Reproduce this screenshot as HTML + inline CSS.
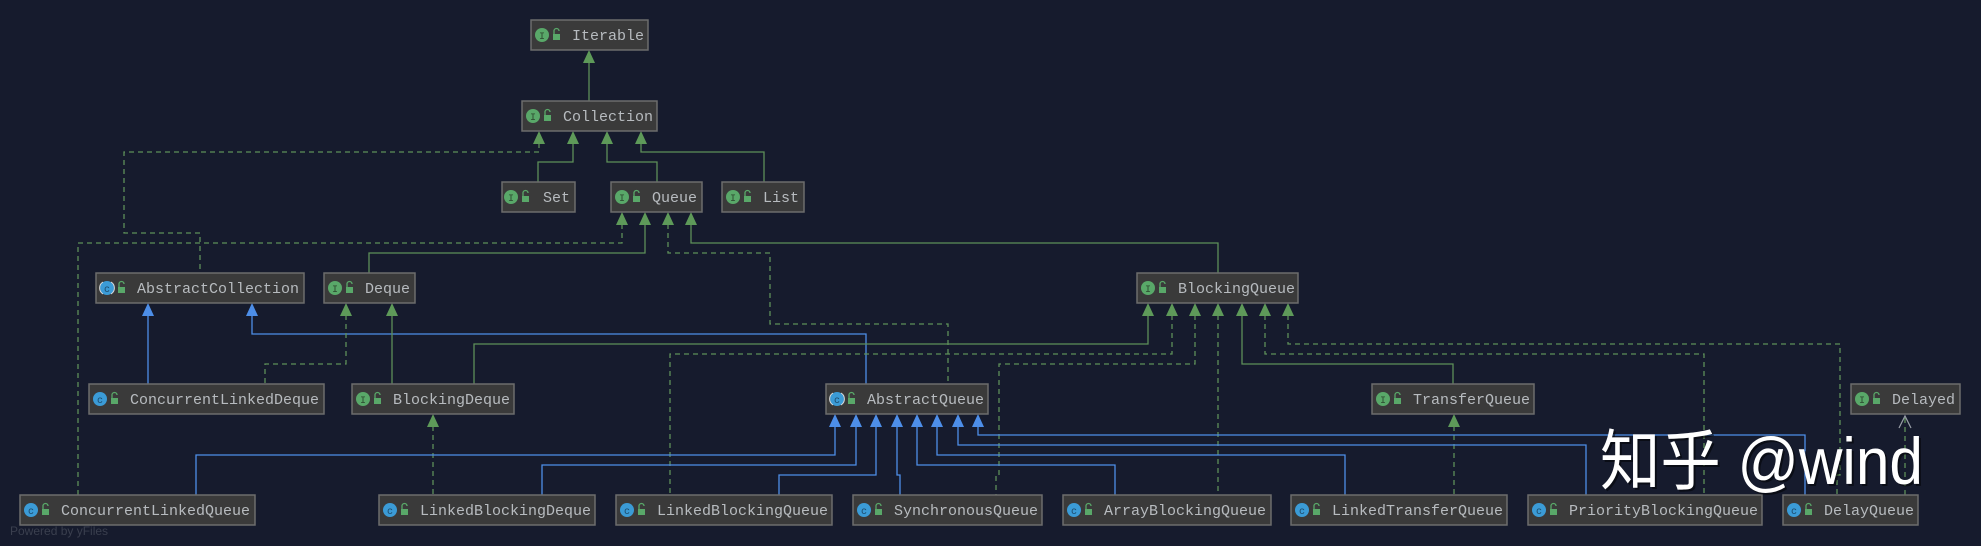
<!DOCTYPE html>
<html><head><meta charset="utf-8"><style>
html,body{margin:0;padding:0;background:#161b2d;}
svg{display:block}
.b{fill:#3a3a3a;stroke:#6c6c6c;stroke-width:1.5}
.t{font-family:"Liberation Mono",monospace;font-size:15px;fill:#b7bbbf}
.g{stroke:#5e8f59;stroke-width:1.3;fill:none}
.gd{stroke:#5e8f59;stroke-width:1.3;fill:none;stroke-dasharray:5,4}
.bl{stroke:#4d8ee8;stroke-width:1.3;fill:none}
.ga{fill:#5e9a59}
.ba{fill:#4d8ee8}
</style></head><body>
<svg width="1981" height="546" viewBox="0 0 1981 546" xmlns="http://www.w3.org/2000/svg">
<defs>
<g id="ai"><circle cx="0" cy="0" r="7" fill="#59a869"/><text x="0" y="4" font-family="Liberation Mono,monospace" font-size="10" fill="#2d4a30" text-anchor="middle">I</text><rect x="11" y="-1" width="7" height="6" fill="#59a869"/><path d="M12,-1 v-3 a2.5,2.5 0 0 1 5,0" stroke="#59a869" stroke-width="1.3" fill="none"/></g>
<g id="ac"><circle cx="0" cy="0" r="7" fill="#3b9bd6"/><text x="0" y="4" font-family="Liberation Mono,monospace" font-size="10" fill="#1d4a6a" text-anchor="middle">c</text><rect x="11" y="-1" width="7" height="6" fill="#59a869"/><path d="M12,-1 v-3 a2.5,2.5 0 0 1 5,0" stroke="#59a869" stroke-width="1.3" fill="none"/></g>
<g id="aa"><circle cx="0" cy="0" r="7" fill="#3b9bd6"/><path d="M-4,-6 a7,7 0 0 0 0,12 M4,-6 a7,7 0 0 1 0,12" stroke="#ddd" stroke-width="1" fill="none"/><text x="0" y="4" font-family="Liberation Mono,monospace" font-size="10" fill="#1d4a6a" text-anchor="middle">c</text><rect x="11" y="-1" width="7" height="6" fill="#59a869"/><path d="M12,-1 v-3 a2.5,2.5 0 0 1 5,0" stroke="#59a869" stroke-width="1.3" fill="none"/></g>
</defs>

<!-- edges -->
<path class="g" d="M589,62 V101"/>
<path class="gd" d="M539,143 V152 H124 V233 H200 V273"/>
<path class="g" d="M573,143 V162 H538 V182"/>
<path class="g" d="M607,143 V162 H657 V182"/>
<path class="g" d="M641,143 V152 H764 V182"/>
<path class="gd" d="M622,224 V243 H78 V495"/>
<path class="g" d="M645,224 V253 H369 V273"/>
<path class="gd" d="M668,224 V253 H770 V324 H948 V384"/>
<path class="g" d="M691,224 V243 H1218 V273"/>
<path class="bl" d="M148,315 V384"/>
<path class="bl" d="M252,315 V334 H866 V384"/>
<path class="gd" d="M346,315 V364 H265 V384"/>
<path class="g" d="M392,315 V384"/>
<path class="gd" d="M433,426 V495"/>
<path class="g" d="M1148,315 V344 H474 V384"/>
<path class="gd" d="M1172,315 V354 H670 V495"/>
<path class="gd" d="M1195,315 V364 H999 V476 H996 V495"/>
<path class="gd" d="M1218,315 V495"/>
<path class="g" d="M1242,315 V364 H1453 V384"/>
<path class="gd" d="M1265,315 V354 H1704 V495"/>
<path class="gd" d="M1288,315 V344 H1840 V475 H1837 V495"/>
<path class="gd" d="M1454,426 V495"/>
<path class="gd" d="M1905,418 V495"/>
<path d="M1899,428 L1905,416 L1911,428" stroke="#9aa0a8" stroke-width="1.2" fill="none"/>
<path class="bl" d="M835,426 V455 H196 V495"/>
<path class="bl" d="M856,426 V465 H542 V495"/>
<path class="bl" d="M876,426 V475 H779 V495"/>
<path class="bl" d="M897,426 V475 H900 V495"/>
<path class="bl" d="M917,426 V465 H1115 V495"/>
<path class="bl" d="M937,426 V455 H1345 V495"/>
<path class="bl" d="M958,426 V445 H1586 V495"/>
<path class="bl" d="M978,426 V435 H1805 V495"/>

<!-- arrowheads -->
<g class="ga">
<polygon points="589,50 583,63 595,63"/>
<polygon points="539,131 533,144 545,144"/><polygon points="573,131 567,144 579,144"/><polygon points="607,131 601,144 613,144"/><polygon points="641,131 635,144 647,144"/>
<polygon points="622,212 616,225 628,225"/><polygon points="645,212 639,225 651,225"/><polygon points="668,212 662,225 674,225"/><polygon points="691,212 685,225 697,225"/>
<polygon points="346,303 340,316 352,316"/><polygon points="392,303 386,316 398,316"/>
<polygon points="433,414 427,427 439,427"/>
<polygon points="1148,303 1142,316 1154,316"/><polygon points="1172,303 1166,316 1178,316"/><polygon points="1195,303 1189,316 1201,316"/><polygon points="1218,303 1212,316 1224,316"/><polygon points="1242,303 1236,316 1248,316"/><polygon points="1265,303 1259,316 1271,316"/><polygon points="1288,303 1282,316 1294,316"/>
<polygon points="1454,414 1448,427 1460,427"/>
</g>
<g class="ba">
<polygon points="148,303 142,316 154,316"/><polygon points="252,303 246,316 258,316"/>
<polygon points="835,414 829,427 841,427"/><polygon points="856,414 850,427 862,427"/><polygon points="876,414 870,427 882,427"/><polygon points="897,414 891,427 903,427"/><polygon points="917,414 911,427 923,427"/><polygon points="937,414 931,427 943,427"/><polygon points="958,414 952,427 964,427"/><polygon points="978,414 972,427 984,427"/>
</g>

<!-- boxes -->
<g>
<rect class="b" x="531" y="20" width="117" height="30"/><use href="#ai" x="542" y="35"/><text class="t" x="572" y="40">Iterable</text>
<rect class="b" x="522" y="101" width="135" height="30"/><use href="#ai" x="533" y="116"/><text class="t" x="563" y="121">Collection</text>
<rect class="b" x="502" y="182" width="73" height="30"/><use href="#ai" x="511" y="197"/><text class="t" x="543" y="202">Set</text>
<rect class="b" x="611" y="182" width="91" height="30"/><use href="#ai" x="622" y="197"/><text class="t" x="652" y="202">Queue</text>
<rect class="b" x="722" y="182" width="82" height="30"/><use href="#ai" x="733" y="197"/><text class="t" x="763" y="202">List</text>

<rect class="b" x="96" y="273" width="208" height="30"/><use href="#aa" x="107" y="288"/><text class="t" x="137" y="293">AbstractCollection</text>
<rect class="b" x="324" y="273" width="91" height="30"/><use href="#ai" x="335" y="288"/><text class="t" x="365" y="293">Deque</text>
<rect class="b" x="1137" y="273" width="161" height="30"/><use href="#ai" x="1148" y="288"/><text class="t" x="1178" y="293">BlockingQueue</text>

<rect class="b" x="89" y="384" width="235" height="30"/><use href="#ac" x="100" y="399"/><text class="t" x="130" y="404">ConcurrentLinkedDeque</text>
<rect class="b" x="352" y="384" width="162" height="30"/><use href="#ai" x="363" y="399"/><text class="t" x="393" y="404">BlockingDeque</text>
<rect class="b" x="826" y="384" width="162" height="30"/><use href="#aa" x="837" y="399"/><text class="t" x="867" y="404">AbstractQueue</text>
<rect class="b" x="1372" y="384" width="162" height="30"/><use href="#ai" x="1383" y="399"/><text class="t" x="1413" y="404">TransferQueue</text>
<rect class="b" x="1851" y="384" width="109" height="30"/><use href="#ai" x="1862" y="399"/><text class="t" x="1892" y="404">Delayed</text>

<rect class="b" x="20" y="495" width="235" height="30"/><use href="#ac" x="31" y="510"/><text class="t" x="61" y="515">ConcurrentLinkedQueue</text>
<rect class="b" x="379" y="495" width="216" height="30"/><use href="#ac" x="390" y="510"/><text class="t" x="420" y="515">LinkedBlockingDeque</text>
<rect class="b" x="616" y="495" width="216" height="30"/><use href="#ac" x="627" y="510"/><text class="t" x="657" y="515">LinkedBlockingQueue</text>
<rect class="b" x="853" y="495" width="189" height="30"/><use href="#ac" x="864" y="510"/><text class="t" x="894" y="515">SynchronousQueue</text>
<rect class="b" x="1063" y="495" width="208" height="30"/><use href="#ac" x="1074" y="510"/><text class="t" x="1104" y="515">ArrayBlockingQueue</text>
<rect class="b" x="1291" y="495" width="216" height="30"/><use href="#ac" x="1302" y="510"/><text class="t" x="1332" y="515">LinkedTransferQueue</text>
<rect class="b" x="1528" y="495" width="234" height="30"/><use href="#ac" x="1539" y="510"/><text class="t" x="1569" y="515">PriorityBlockingQueue</text>
<rect class="b" x="1783" y="495" width="135" height="30"/><use href="#ac" x="1794" y="510"/><text class="t" x="1824" y="515">DelayQueue</text>
</g>

<text x="10" y="535" font-family="Liberation Sans,sans-serif" font-size="12" fill="#3a3f4e">Powered by yFiles</text>
<text x="1602" y="486" font-family="Liberation Sans,'Noto Sans CJK SC',sans-serif" font-size="66" fill="#000" opacity="0.5" textLength="323" lengthAdjust="spacingAndGlyphs">知乎 @wind</text>
<text x="1600" y="484" font-family="Liberation Sans,'Noto Sans CJK SC',sans-serif" font-size="66" fill="#ffffff" textLength="323" lengthAdjust="spacingAndGlyphs">知乎 @wind</text>
</svg>
</body></html>
